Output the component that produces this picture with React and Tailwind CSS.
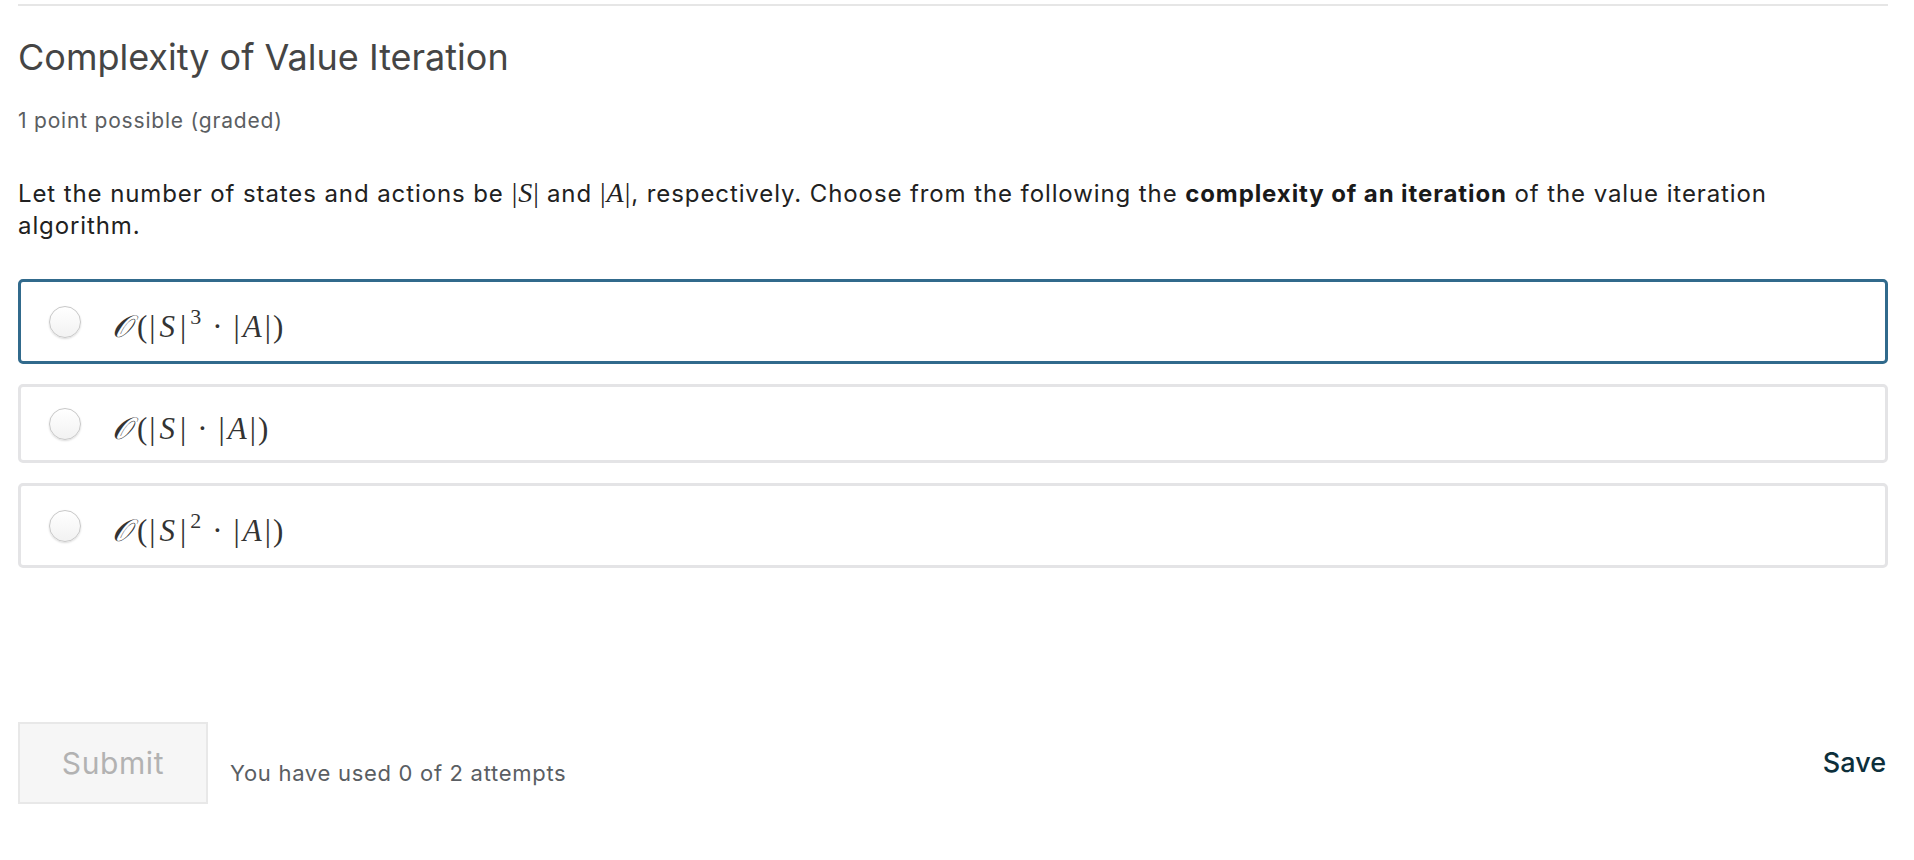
import React from "react";

function Radio() {
  return (
    <span className="block w-[32px] h-[32px] shrink-0 rounded-full border border-[#c8c8c8] bg-gradient-to-b from-white to-[#f2f2f2] shadow-[0_1px_2px_rgba(0,0,0,0.14)]" />
  );
}

function Bar({ cls = "" }) {
  return <span className={"inline-block " + cls}>|</span>;
}

function MathExpr({ power }) {
  return (
    <span className="inline-flex items-baseline font-['Liberation_Serif',serif] text-[31px] leading-none text-[#333333]">
      <span className="italic">𝒪</span>
      <span className="ml-[5px]">(</span>
      <Bar cls="ml-[2px]" />
      <span className="italic ml-[4px] mr-[5px]">S</span>
      <Bar />
      {power ? (
        <span className="text-[22px] relative -top-[13px] ml-[4px]">{power}</span>
      ) : null}
      <span className="mx-[11px]">·</span>
      <Bar />
      <span className="italic ml-[3px] mr-[3px]">A</span>
      <Bar />
      <span className="ml-[2px]">)</span>
    </span>
  );
}

function Option({ power, selected, h }) {
  return (
    <div
      className={
        "flex items-center rounded-[5px] border-[3px] pl-[28px] " +
        (selected ? "border-[#316a8c] " : "border-[#e4e4e6] ") +
        h
      }
    >
      <Radio />
      <span className="ml-[31px] pt-[10px]">
        <MathExpr power={power} />
      </span>
    </div>
  );
}

function InlineMath({ letter, cls }) {
  return (
    <span className={"font-['Liberation_Serif',serif] text-[28px] tracking-normal text-[#222222] " + cls}>
      |<span className="italic mx-[1px]">{letter}</span>|
    </span>
  );
}

export default function App() {
  return (
    <div className="w-[1914px] h-[860px] overflow-hidden bg-white font-['Inter','Noto_Sans',sans-serif]">
      <div className="pl-[18px] pr-[26px] pt-[4px]">
        <div className="h-[2px] bg-[#e6e6e6]" />
        <h2 className="mt-[30px] text-[36px] leading-[43px] font-normal text-[#454545]">
          Complexity of Value Iteration
        </h2>
        <div className="mt-[27px] text-[21px] leading-[30px] tracking-[0.8px] text-[#5b5e62]">
          1 point possible (graded)
        </div>
        <p className="mt-[41px] text-[24px] leading-[32px] tracking-[0.9px] text-[#212121]">
          <span>Let the number of states and actions be</span>
          <InlineMath letter="S" cls="mx-[8px]" />
          <span>and</span>
          <InlineMath letter="A" cls="ml-[8px] mr-[1px]" />
          <span>, respectively. Choose from the following the</span>{" "}
          <strong className="font-bold text-[#1a1a1a]">complexity of an iteration</strong>{" "}
          <span>of the value iteration</span> <span>algorithm.</span>
        </p>
        <div className="mt-[37px] flex flex-col gap-[20px]">
          <Option power="3" selected h="h-[85px]" />
          <Option h="h-[79px]" />
          <Option power="2" h="h-[85px]" />
        </div>
        <div className="mt-[154px] flex items-start">
          <button className="w-[190px] h-[82px] border-2 border-[#e8e8e8] bg-[#f6f6f6] text-[30px] tracking-[0.6px] text-[#b2b2b2]">
            Submit
          </button>
          <span className="ml-[22px] mt-[35px] text-[22px] leading-[32px] tracking-[0.7px] text-[#5a5e63]">
            You have used 0 of 2 attempts
          </span>
          <button className="ml-auto mt-[25px] mr-[2px] text-[27px] leading-[32px] font-medium text-[#0d2f3b]">
            Save
          </button>
        </div>
      </div>
    </div>
  );
}
